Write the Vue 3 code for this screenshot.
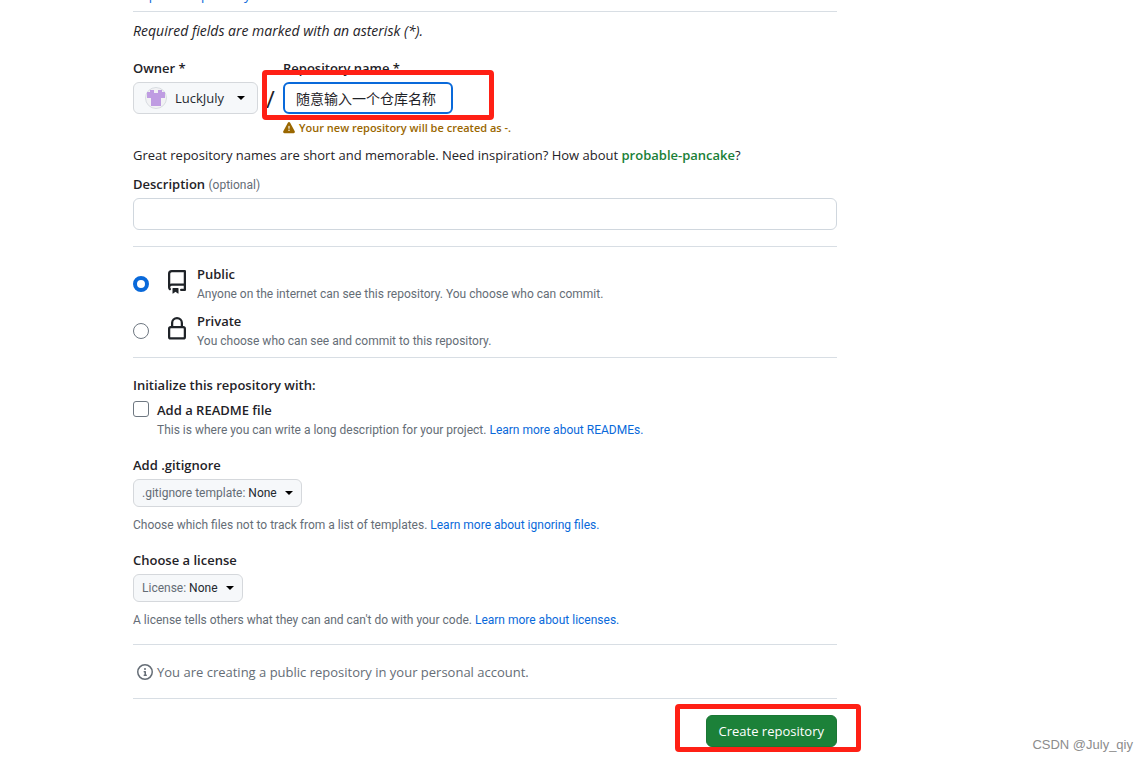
<script setup>
import { ref } from 'vue'

const repoName = ref('随意输入一个仓库名称')
const description = ref('')
const visibility = ref('public')
const readme = ref(false)
</script>

<template>
  <main class="page">
    <form class="form" @submit.prevent>
      <header class="top"><a href="#import">Import a repository.</a></header>

      <p class="required">Required fields are marked with an asterisk (*).</p>

      <div class="names">
        <div class="field">
          <label class="title" for="owner">Owner *</label>
          <button id="owner" type="button" class="btn owner" aria-haspopup="menu">
            <svg class="avatar" viewBox="0 0 22 22" aria-hidden="true">
              <circle cx="11" cy="11" r="10.5" fill="#f2f2f4" stroke="#d8dce1" />
              <path fill="#bf9ce2" d="M5 3h4v3h4V3h4v2h3v6h-4v8H6v-8H2V5h3z" />
            </svg>
            <span>LuckJuly</span>
            <svg class="caret" viewBox="0 0 8 4" aria-hidden="true"><path d="M0 0h8L4 4z" /></svg>
          </button>
        </div>
        <span class="slash">/</span>
        <div class="field">
          <label class="title" for="repo">Repository name *</label>
          <input id="repo" v-model="repoName" class="input repo" type="text" />
          <p class="warning">
            <svg viewBox="0 0 16 16" aria-hidden="true">
              <path d="M6.457 1.047c.659-1.234 2.427-1.234 3.086 0l6.082 11.378A1.75 1.75 0 0 1 14.082 15H1.918a1.75 1.75 0 0 1-1.543-2.575ZM8 5a.75.75 0 0 0-.75.75v2.500a.75.75 0 0 0 1.500 0v-2.500A.75.75 0 0 0 8 5Zm1 6a1 1 0 1 0-2 0 1 1 0 0 0 2 0Z" />
            </svg>
            Your new repository will be created as -.
          </p>
        </div>
        <div class="mark mark-name"></div>
      </div>

      <p class="hint">
        Great repository names are short and memorable. Need inspiration? How about
        <strong>probable-pancake</strong>?
      </p>

      <label class="title" for="description">Description <small>(optional)</small></label>
      <input id="description" v-model="description" class="input" type="text" />

      <hr />

      <div class="choices">
        <div class="choice">
          <input id="public" v-model="visibility" type="radio" name="visibility" value="public" />
          <svg class="kind" viewBox="0 0 16 16" aria-hidden="true">
            <path d="M2 2.500A2.500 2.500 0 0 1 4.500 0h8.750a.75.75 0 0 1 .75.75v12.500a.75.75 0 0 1-.75.75h-2.500a.75.75 0 0 1 0-1.500h1.750v-2h-8a1 1 0 0 0-.714 1.700.75.75 0 1 1-1.072 1.050A2.495 2.495 0 0 1 2 11.500Zm10.500-1h-8a1 1 0 0 0-1 1v6.708A2.486 2.486 0 0 1 4.500 9h8ZM5 12.250a.25.25 0 0 1 .25-.25h3.500a.25.25 0 0 1 .25.25v3.250a.25.25 0 0 1-.4.2l-1.450-1.087a.249.249 0 0 0-.3 0L5.400 15.700a.25.25 0 0 1-.4-.2Z" />
          </svg>
          <div>
            <label class="title" for="public">Public</label>
            <p class="note">Anyone on the internet can see this repository. You choose who can commit.</p>
          </div>
        </div>
        <div class="choice">
          <input id="private" v-model="visibility" type="radio" name="visibility" value="private" />
          <svg class="kind" viewBox="0 0 16 16" aria-hidden="true">
            <path d="M4 4a4 4 0 0 1 8 0v2h.25c.966 0 1.750.784 1.750 1.750v5.500A1.750 1.750 0 0 1 12.250 15h-8.500A1.750 1.750 0 0 1 2 13.250v-5.500C2 6.784 2.784 6 3.750 6H4Zm8.250 3.500h-8.500a.25.25 0 0 0-.25.25v5.500c0 .138.112.25.25.25h8.500a.25.25 0 0 0 .25-.25v-5.500a.25.25 0 0 0-.25-.25ZM10.500 6V4a2.500 2.500 0 1 0-5 0v2Z" />
          </svg>
          <div>
            <label class="title" for="private">Private</label>
            <p class="note">You choose who can see and commit to this repository.</p>
          </div>
        </div>
      </div>

      <hr class="close" />

      <section class="init">
        <h2 class="title">Initialize this repository with:</h2>
        <div class="readme">
          <input id="readme" v-model="readme" type="checkbox" />
          <div>
            <label class="title" for="readme">Add a README file</label>
            <p class="note">
              This is where you can write a long description for your project.
              <a href="#readmes">Learn more about READMEs.</a>
            </p>
          </div>
        </div>
      </section>

      <section class="option">
        <label class="title" for="ignore">Add .gitignore</label>
        <button id="ignore" type="button" class="btn small" aria-haspopup="menu">
          <span><i>.gitignore template:</i> None</span>
          <svg class="caret" viewBox="0 0 8 4" aria-hidden="true"><path d="M0 0h8L4 4z" /></svg>
        </button>
        <p class="note">
          Choose which files not to track from a list of templates.
          <a href="#ignoring">Learn more about ignoring files.</a>
        </p>
      </section>

      <section class="option">
        <label class="title" for="license">Choose a license</label>
        <button id="license" type="button" class="btn small" aria-haspopup="menu">
          <span><i>License:</i> None</span>
          <svg class="caret" viewBox="0 0 8 4" aria-hidden="true"><path d="M0 0h8L4 4z" /></svg>
        </button>
        <p class="note">
          A license tells others what they can and can't do with your code.
          <a href="#licenses">Learn more about licenses.</a>
        </p>
      </section>

      <p class="info">
        <svg viewBox="0 0 16 16" aria-hidden="true">
          <path d="M0 8a8 8 0 1 1 16 0A8 8 0 0 1 0 8Zm8-6.500a6.500 6.500 0 1 0 0 13 6.500 6.500 0 0 0 0-13ZM6.500 7.750A.75.75 0 0 1 7.250 7h1a.75.75 0 0 1 .75.75v2.750h.25a.75.75 0 0 1 0 1.500h-2a.75.75 0 0 1 0-1.500h.25v-2h-.25a.75.75 0 0 1-.75-.75ZM8 6a1 1 0 1 1 0-2 1 1 0 0 1 0 2Z" />
        </svg>
        You are creating a public repository in your personal account.
      </p>

      <div class="actions">
        <button class="create" type="submit">Create repository</button>
        <div class="mark mark-create"></div>
      </div>
    </form>
    <span class="credit">CSDN @July_qiy</span>
  </main>
</template>

<style>
body {
  background: #fff;
}
</style>

<style scoped>
.page {
  position: relative;
  padding: 0 24px 14px 133px;
  font: 13px/20px "Segoe UI", "Open Sans", "Noto Sans CJK SC", sans-serif;
  color: #1f2328;
}
.page * {
  box-sizing: border-box;
}
.form {
  max-width: 704px;
}
p,
h2 {
  margin: 0;
}
a {
  color: #0969da;
  text-decoration: none;
}
.top {
  display: flex;
  align-items: flex-end;
  height: 12px;
  padding-bottom: 6px;
  border-bottom: 1px solid #d8dee4;
}
.required {
  padding: 9px 0 17px;
  font-size: 14px;
  font-style: italic;
}
.names {
  position: relative;
  display: flex;
  align-items: flex-start;
  height: 87px;
}
.title {
  display: block;
  font-size: 13px;
  font-weight: 600;
  line-height: 20px;
}
.title small {
  font-family: Roboto, sans-serif;
  font-size: 12px;
  font-weight: 400;
  line-height: 1;
  color: #656d76;
}
.btn {
  display: flex;
  align-items: center;
  gap: 8px;
  border: 1px solid #d5d8dc;
  border-radius: 6px;
  background: #f6f8fa;
  color: #24292f;
  font: inherit;
}
.caret {
  width: 8px;
  height: 4px;
}
.owner {
  width: 125px;
  height: 32px;
  margin-top: 4px;
  padding: 0 12px 0 11px;
}
.owner .caret {
  margin-left: auto;
}
.avatar {
  width: 22px;
  height: 22px;
}
.slash {
  width: 25px;
  padding-top: 31px;
  text-align: center;
  font-size: 24px;
}
.input {
  display: block;
  width: 100%;
  height: 32px;
  margin-top: 4px;
  padding: 0 12px;
  border: 1px solid #d0d7de;
  border-radius: 6px;
  background: #fff;
  color: #1f2328;
  font: inherit;
  font-size: 14px;
  outline: none;
}
.repo {
  width: 170px;
  padding: 0 11px;
  border: 2px solid #0969da;
}
.warning {
  display: flex;
  align-items: center;
  gap: 4px;
  margin-top: 4px;
  font-size: 11px;
  font-weight: 600;
  color: #9a6700;
}
.warning svg {
  width: 12px;
  height: 12px;
  fill: currentColor;
}
.mark {
  position: absolute;
  border: 5px solid #ff2015;
  border-radius: 4px;
  pointer-events: none;
}
.mark-name {
  top: 12px;
  left: 129px;
  width: 232px;
  height: 50px;
}
.mark-create {
  top: 5px;
  right: -24px;
  width: 186px;
  height: 48px;
}
.hint {
  margin-bottom: 9px;
}
.hint strong {
  font-weight: 600;
  color: #1a7f37;
}
hr {
  height: 1px;
  margin: 16px 0 0;
  border: 0;
  background: #d8dee4;
}
.choices {
  display: grid;
  gap: 7px;
  padding-top: 17px;
}
.choice {
  display: flex;
  align-items: center;
}
input[type="radio"],
input[type="checkbox"] {
  flex: none;
  appearance: none;
  width: 16px;
  height: 16px;
  margin: 0;
  border: 1px solid #6e7781;
  border-radius: 3px;
  background: #fff;
}
input[type="radio"] {
  border-radius: 50%;
}
input[type="radio"]:checked {
  border: 4px solid #0969da;
}
.kind {
  width: 24px;
  height: 24px;
  margin: 0 8px 4px 16px;
  fill: #1f2328;
}
.note {
  font-family: Roboto, sans-serif;
  font-size: 12px;
  color: #656d76;
}
hr.close {
  margin-top: 6px;
}
.init {
  padding-top: 17px;
}
.readme {
  display: flex;
  gap: 8px;
  padding-top: 5px;
}
.readme input {
  margin-top: 1px;
}
.option {
  padding-top: 15px;
}
.small {
  height: 28px;
  margin: 4px 0 8px;
  padding: 0 8px;
  font-family: Roboto, sans-serif;
  font-size: 12px;
}
.small i {
  font-style: normal;
  color: #656d76;
}
.info {
  display: flex;
  align-items: center;
  gap: 4px;
  margin-top: 14px;
  padding: 17px 4px 16px;
  border: solid #d8dee4;
  border-width: 1px 0;
  color: #656d76;
}
.info svg {
  width: 16px;
  height: 16px;
  fill: currentColor;
}
.actions {
  position: relative;
  display: flex;
  justify-content: flex-end;
  padding-top: 16px;
}
.create {
  height: 32px;
  padding: 0 12px;
  border: 1px solid #1b7735;
  border-radius: 6px;
  background: #1c8139;
  color: #fff;
  font: inherit;
}
.credit {
  position: absolute;
  right: 14px;
  bottom: 6px;
  font: 13px/20px "Liberation Sans", sans-serif;
  color: #8c8c8c;
}
</style>
